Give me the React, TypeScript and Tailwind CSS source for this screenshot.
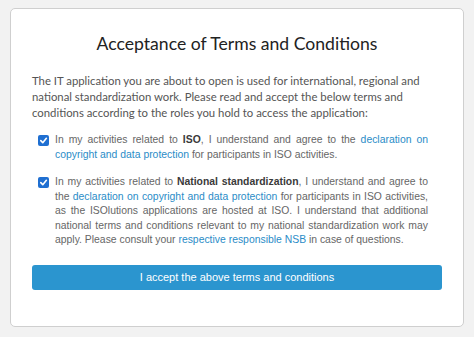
import React from "react";

const Check = () => (
  <span className="mt-[2px] flex h-[11px] w-[11px] shrink-0 items-center justify-center rounded-[2px] bg-[#1f6fd1]">
    <svg width="9" height="9" viewBox="0 0 10 10">
      <path d="M2 5.2 L4.2 7.4 L8.2 2.6" stroke="white" strokeWidth="1.8" fill="none" strokeLinecap="round" strokeLinejoin="round" />
    </svg>
  </span>
);

const L = ({ children }: { children: React.ReactNode }) => (
  <span className="block text-justify [text-align-last:justify]">{children}</span>
);
const Last = ({ children }: { children: React.ReactNode }) => <span className="block">{children}</span>;
const A = ({ children }: { children: React.ReactNode }) => <span className="text-[#2a8cc7]">{children}</span>;

export default function App() {
  return (
    <div className="min-h-[337px] w-[474px] bg-[#f2f2f2] pl-[10px] pt-[8px]">
      <div className="h-[319px] w-[454px] rounded-[5px] border border-[#cfcfcf] bg-white px-[21px] pt-[24px]">
        <h1
          className="text-center text-[17.6px] leading-[22px] text-[#222]"
          style={{ fontFamily: 'Lato, sans-serif' }}
        >
          Acceptance of Terms and Conditions
        </h1>
        <p
          className="mt-[18px] whitespace-nowrap text-[11.35px] leading-[16px] text-[#555]"
          style={{ fontFamily: 'Lato, sans-serif' }}
        >
          The IT application you are about to open is used for international, regional and
          <br />
          national standardization work. Please read and accept the below terms and
          <br />
          conditions according to the roles you hold to access the application:
        </p>
        <div
          className="mt-[12px] flex flex-col gap-[13px] pl-[6px] pr-[14px] text-[10.4px] leading-[14.5px] text-[#666]"
          style={{ fontFamily: '"Liberation Sans", Arial, sans-serif' }}
        >
          <div className="flex gap-[6px]">
            <Check />
            <p className="flex-1">
              <L>
                In my activities related to <b className="text-[#3a3a3a]">ISO</b>, I understand and agree to the{" "}
                <A>declaration on</A>
              </L>
              <Last>
                <A>copyright and data protection</A> for participants in ISO activities.
              </Last>
            </p>
          </div>
          <div className="flex gap-[6px]">
            <Check />
            <p className="flex-1">
              <L>
                In my activities related to <b className="text-[#3a3a3a]">National standardization</b>, I understand and
                agree to
              </L>
              <L>
                the <A>declaration on copyright and data protection</A> for participants in ISO activities,
              </L>
              <L>as the ISOlutions applications are hosted at ISO. I understand that additional</L>
              <L>national terms and conditions relevant to my national standardization work may</L>
              <Last>
                apply. Please consult your <A>respective responsible NSB</A> in case of questions.
              </Last>
            </p>
          </div>
        </div>
        <button
          className="mt-[17px] h-[25px] w-full rounded-[3px] bg-[#2b95cf] text-[11px] text-white"
          style={{ fontFamily: '"Liberation Sans", Arial, sans-serif' }}
        >
          I accept the above terms and conditions
        </button>
      </div>
    </div>
  );
}
